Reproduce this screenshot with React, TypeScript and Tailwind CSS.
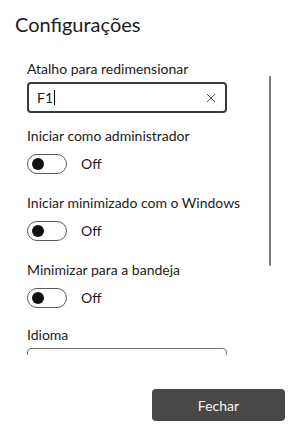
import { useState } from 'react'

function Toggle({ label }: { label: string }) {
  return (
    <div className="flex flex-col">
      <div className="text-[14px] leading-[20px] text-[#1b1b1b]">{label}</div>
      <div className="flex items-center mt-[8px] h-[20px]">
        <div className="w-[40px] h-[20px] rounded-full border border-[#5c5c5c] flex items-center pl-[4px]">
          <div className="w-[12px] h-[12px] rounded-full bg-[#111]" />
        </div>
        <span className="ml-[14px] text-[14px] leading-[20px] text-[#1b1b1b]">Off</span>
      </div>
    </div>
  )
}

export default function App() {
  const [value] = useState('F1')

  return (
    <div
      className="w-[305px] h-[439px] bg-white flex flex-col overflow-hidden"
      style={{ fontFamily: '"Segoe UI", Lato, "Liberation Sans", sans-serif' }}
    >
      {/* Title */}
      <h1 className="pl-[15px] pt-[10px] text-[20px] leading-[28px] text-[#1b1b1b]">Configurações</h1>

      {/* Scrollable settings */}
      <div className="relative mt-[20px] h-[297px] overflow-hidden">
        <div className="pl-[27px] pt-[1px] flex flex-col">
          <div className="text-[14px] leading-[20px] text-[#1b1b1b]">Atalho para redimensionar</div>
          <div className="mt-[3px] w-[200px] h-[31px] rounded-[4px] border-[2px] border-[#3a3a3a] flex items-center pl-[8px] pr-[9px]">
            <span className="text-[14px] text-[#1b1b1b]">{value}</span>
            <span className="w-px h-[15px] bg-black ml-[1px]" />
            <span className="flex-1" />
            <svg width="10" height="10" viewBox="0 0 10 10">
              <path d="M1 1L9 9M9 1L1 9" stroke="#5a5a5a" strokeWidth="1" />
            </svg>
          </div>

          <div className="mt-[13px] flex flex-col gap-[19px]">
            <Toggle label="Iniciar como administrador" />
            <Toggle label="Iniciar minimizado com o Windows" />
            <Toggle label="Minimizar para a bandeja" />
            <div className="flex flex-col -mt-[2px]">
              <div className="text-[14px] leading-[20px] text-[#1b1b1b]">Idioma</div>
              <div className="mt-[3px] w-[200px] h-[32px] rounded-[4px] border border-[#707070]" />
            </div>
          </div>
        </div>

        {/* Scrollbar */}
        <div className="absolute left-[269px] top-[18px] w-[2px] h-[190px] rounded-full bg-[#7a7a7a]" />
      </div>

      {/* Footer */}
      <div className="flex justify-end pr-[20px] mt-[34px]">
        <button className="w-[133px] h-[32px] rounded-[4px] bg-[#4a4846] text-[14px] text-[#f5f5f5]">
          Fechar
        </button>
      </div>
    </div>
  )
}
